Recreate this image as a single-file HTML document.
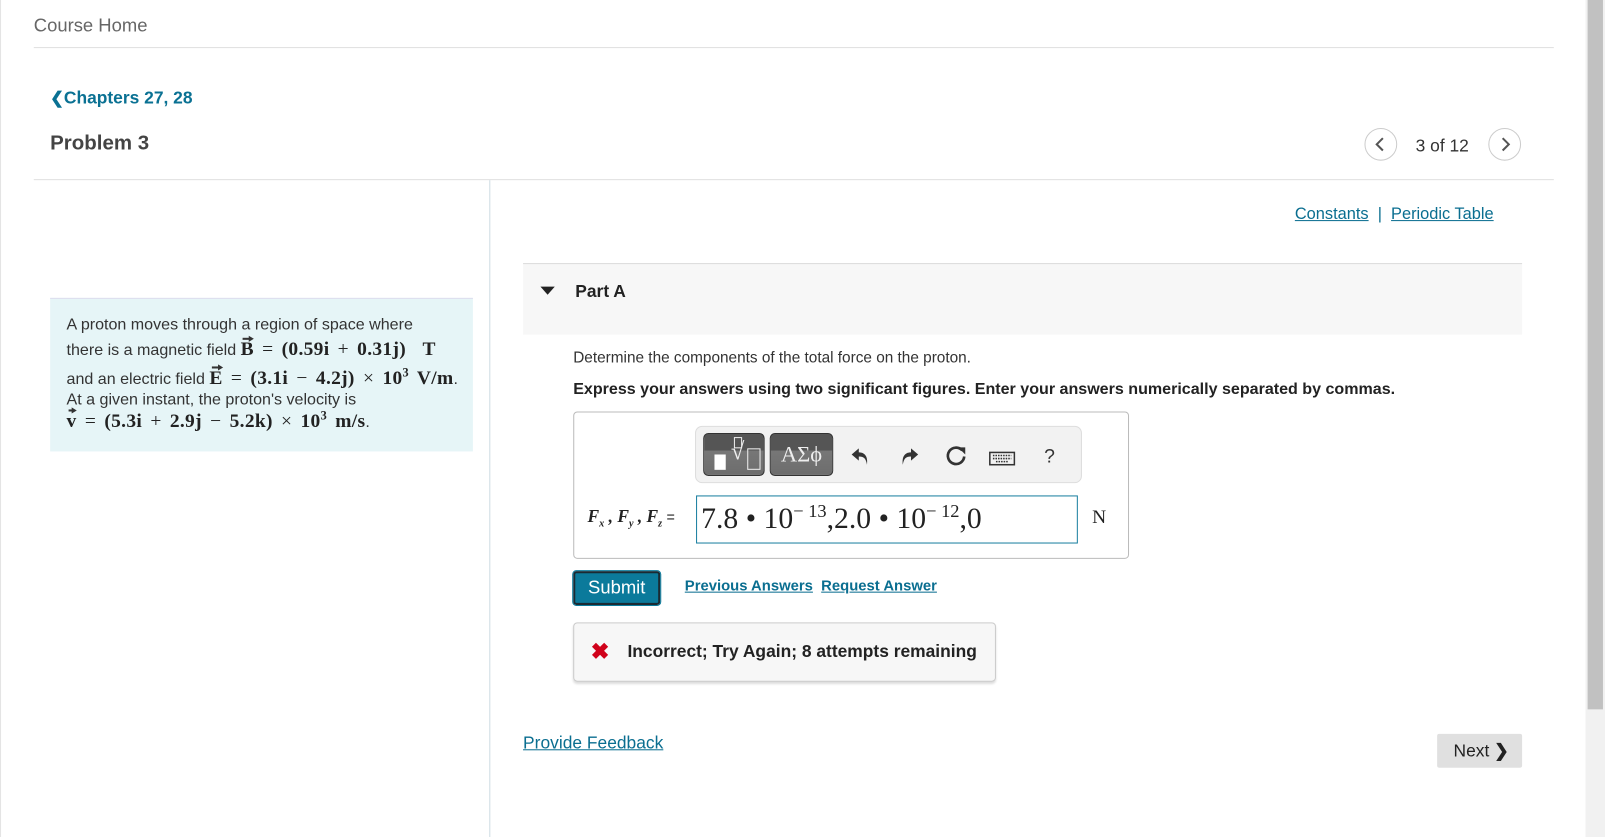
<!DOCTYPE html>
<html><head><meta charset="utf-8"><style>
html,body{margin:0;padding:0;background:#fff;overflow:hidden;width:1605px;height:837px}
#w{position:absolute;left:0;top:0;width:1568px;height:818px;transform:scale(1.02360);transform-origin:0 0;font-family:"Liberation Sans",sans-serif;color:#333}
.a{position:absolute;white-space:nowrap}
.lnk{color:#0a6e90;text-decoration:underline}
.m{font-family:"Liberation Serif",serif;font-weight:bold;font-size:19px;color:#222;word-spacing:3px;letter-spacing:0.3px}
.n{font-weight:normal}
.v{position:relative;display:inline-block}
.v:before{content:"";position:absolute;left:2px;right:2px;top:-1px;height:2px;background:#333}
.v:after{content:"";position:absolute;right:0;top:-3px;border-left:5px solid #333;border-top:3px solid transparent;border-bottom:3px solid transparent}
.circ{position:absolute;width:32px;height:32px;border:1px solid #ccc;border-radius:50%;box-sizing:border-box}
.tb{position:absolute;top:6px;height:42px;border-radius:5px;background:linear-gradient(#555 0,#555 40%,#777 41%,#6d6d6d 100%);border:1px solid #333;box-sizing:border-box;color:#eee}
.ln{position:absolute;left:65px;font-size:15.7px;color:#333;white-space:nowrap}
</style></head><body><div id="w">
<div class="a" style="left:0;top:0;width:1px;height:818px;background:#e4e4e4"></div>
<div class="a" style="left:33px;top:15px;font-size:18px;color:#666">Course Home</div>
<div class="a" style="left:33px;top:46px;width:1485px;height:1px;background:#e0e0e0"></div>
<div class="a" style="left:49px;top:86px;font-size:17px;font-weight:bold;color:#0a7193"><span style="font-size:16px">&#10094;</span>Chapters 27, 28</div>
<div class="a" style="left:49px;top:129px;font-size:20px;font-weight:bold;color:#444">Problem 3</div>
<div class="circ" style="left:1333px;top:125px"><svg width="30" height="30" viewBox="0 0 30 30"><path d="M17 9 L11 15 L17 21" stroke="#555" stroke-width="2" fill="none"/></svg></div>
<div class="a" style="left:1383px;top:133px;font-size:17px">3 of 12</div>
<div class="circ" style="left:1454px;top:125px"><svg width="30" height="30" viewBox="0 0 30 30"><path d="M13 9 L19 15 L13 21" stroke="#555" stroke-width="2" fill="none"/></svg></div>
<div class="a" style="left:33px;top:175px;width:1485px;height:1px;background:#e0e0e0"></div>
<div class="a" style="left:478px;top:176px;width:1px;height:642px;background:#cfdce3"></div>
<div class="a" style="left:49px;top:291px;width:413px;height:149px;background:#e6f5f7;border-top:1px solid #dde"></div>
<div class="ln" style="top:309px">A proton moves through a region of space where</div>
<div class="ln" style="top:331px">there is a magnetic field <span class="m"><span class="v">B</span> <span class="n">=</span> (0.59i <span class="n">+</span> 0.31j) &nbsp;T</span></div>
<div class="ln" style="top:357px">and an electric field <span class="m"><span class="v">E</span> <span class="n">=</span> (3.1i <span class="n">−</span> 4.2j) <span class="n">×</span> 10<sup style="font-size:12px">3</sup> V/m</span>.</div>
<div class="ln" style="top:382px">At a given instant, the proton's velocity is</div>
<div class="ln" style="top:399px"><span class="m"><span class="v">v</span> <span class="n">=</span> (5.3i <span class="n">+</span> 2.9j <span class="n">−</span> 5.2k) <span class="n">×</span> 10<sup style="font-size:12px">3</sup> m/s</span>.</div>
<div class="a" style="left:1265px;top:201px;font-size:16px"><span class="lnk">Constants</span> &nbsp;<span style="color:#0a6e90">|</span>&nbsp; <span class="lnk">Periodic Table</span></div>
<div class="a" style="left:511px;top:257px;width:976px;height:69px;background:#f7f7f7;border-top:1px solid #ddd"></div>
<div class="a" style="left:528px;top:280px;width:0;height:0;border-left:7px solid transparent;border-right:7px solid transparent;border-top:8px solid #222"></div>
<div class="a" style="left:562px;top:275px;font-size:17px;font-weight:bold;color:#222">Part A</div>
<div class="a" style="left:560px;top:341px;font-size:15px">Determine the components of the total force on the proton.</div>
<div class="a" style="left:560px;top:372px;font-size:15.7px;font-weight:bold;color:#222">Express your answers using two significant figures. Enter your answers numerically separated by commas.</div>
<div class="a" style="left:560px;top:402px;width:543px;height:144px;border:1px solid #bbb;border-radius:4px;box-sizing:border-box"></div>
<div class="a" style="left:679px;top:416px;width:378px;height:56px;background:#f2f2f2;border:1px solid #ddd;border-radius:7px;box-sizing:border-box">
<div class="tb" style="left:7px;width:60px"><div style="position:absolute;left:10px;top:20px;width:11px;height:15px;background:#fff"></div><span style="position:absolute;left:26px;top:5px;font-size:24px;font-family:'Liberation Serif',serif">√</span><div style="position:absolute;left:42px;top:14px;width:11px;height:19px;border:1px solid #eee"></div><div style="position:absolute;left:29px;top:3px;width:6px;height:9px;border:1px solid #eee"></div></div>
<div class="tb" style="left:72px;width:62px;text-align:center;font-family:'Liberation Serif',serif;font-size:22px;line-height:40px">ΑΣϕ</div>
<svg class="a" style="left:150px;top:18px" width="22" height="22" viewBox="0 0 22 22"><path d="M9 3 L2 9 L9 15 V11 C14 11 16 13 17 19 C18 11 15 7 9 7 Z" fill="#333"/></svg>
<svg class="a" style="left:197px;top:18px" width="22" height="22" viewBox="0 0 22 22"><path d="M13 3 L20 9 L13 15 V11 C8 11 6 13 5 19 C4 11 7 7 13 7 Z" fill="#333"/></svg>
<svg class="a" style="left:242px;top:17px" width="24" height="24" viewBox="0 0 24 24"><path d="M18 6 A8 8 0 1 0 20 12" stroke="#333" stroke-width="2.6" fill="none"/><path d="M14 3 L21 3 L21 10 Z" fill="#333"/></svg>
<svg class="a" style="left:286px;top:24px" width="26" height="14" viewBox="0 0 26 14"><rect x="1" y="1" width="24" height="12" fill="none" stroke="#333" stroke-width="1.5"/><path d="M4 4h18M4 7h18M7 10h12" stroke="#333" stroke-width="1.5" stroke-dasharray="1.5 1"/></svg>
<div class="a" style="left:340px;top:19px;font-size:19px;color:#333">?</div>
</div>
<div class="a" style="left:574px;top:495px;font-family:'Liberation Serif',serif;font-style:italic;font-weight:bold;font-size:17px;color:#222">F<sub style="font-size:10px">x</sub> , F<sub style="font-size:10px">y</sub> , F<sub style="font-size:10px">z</sub> <span style="font-style:normal;font-weight:normal;font-family:'Liberation Sans';font-size:14px">=</span></div>
<div class="a" style="left:680px;top:484px;width:373px;height:47px;border:1px solid #1a7fa0;box-sizing:border-box"></div>
<div class="a" style="left:685px;top:489px;font-family:'Liberation Serif',serif;font-size:29px;color:#222">7.8 • 10<sup style="font-size:18px">− 13</sup>,2.0 • 10<sup style="font-size:18px">− 12</sup>,0</div>
<div class="a" style="left:1067px;top:495px;font-family:'Liberation Serif',serif;font-size:19px;color:#222">N</div>
<div class="a" style="left:560px;top:558px;width:85px;height:33px;background:#0b7a9b;border:2px solid #1a2a33;outline:1px solid #0b7a9b;border-radius:3px;box-sizing:border-box;color:#fff;font-size:18px;text-align:center;line-height:29px">Submit</div>
<div class="a" style="left:669px;top:565px;font-size:14.5px;font-weight:bold"><span class="lnk">Previous Answers</span> &nbsp;<span class="lnk">Request Answer</span></div>
<div class="a" style="left:560px;top:608px;width:413px;height:58px;background:#f7f7f7;border:1px solid #ccc;border-radius:4px;box-sizing:border-box;box-shadow:0 2px 2px #ddd"></div>
<div class="a" style="left:577px;top:624px;font-size:22px;font-weight:bold;color:#d0021b">✖</div>
<div class="a" style="left:613px;top:627px;font-size:17px;font-weight:bold;color:#222">Incorrect; Try Again; 8 attempts remaining</div>
<div class="a" style="left:511px;top:716px;font-size:17px"><span class="lnk">Provide Feedback</span></div>
<div class="a" style="left:1404px;top:717px;width:83px;height:33px;background:#e0e0e0;border-radius:2px;font-size:17px;line-height:33px;color:#222;padding-left:16px;box-sizing:border-box">Next <span style="font-weight:bold">&#10095;</span></div>
<div class="a" style="left:1549px;top:0;width:19px;height:818px;background:#f1f1f1"></div>
<div class="a" style="left:1551px;top:0;width:15px;height:693px;background:#c1c1c1"></div>
</div></body></html>
